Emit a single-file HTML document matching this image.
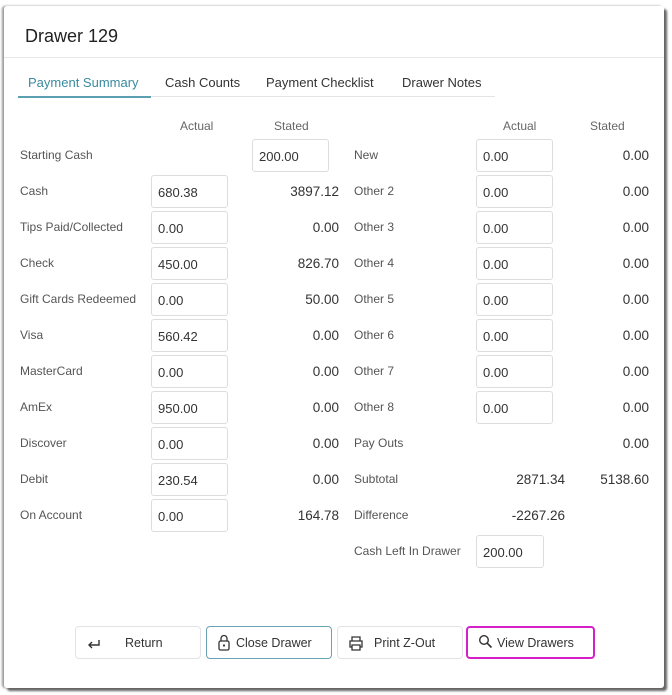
<!DOCTYPE html>
<html><head><meta charset="utf-8"><style>
*{box-sizing:border-box;margin:0;padding:0}
body{width:672px;height:695px;background:#fff;font-family:"Liberation Sans",sans-serif;position:relative;overflow:hidden}
.card{position:absolute;left:4px;top:6px;width:660px;height:682px;background:#fff;box-shadow:3px 3px 2px #666,-2px 0 2px #999;border-radius:3px}
.a{position:absolute;white-space:nowrap}
.t{font-size:18px;color:#222;left:25px;top:26px}
.hr{left:4px;top:57px;width:660px;height:1px;background:#e6e6e6}
.tab{font-size:13px;color:#333;top:75px}
.lb{font-size:12px;color:#555}
.hd{font-size:12px;color:#666}
.v{font-size:13.5px;color:#333;text-align:right}
.in{border:1px solid #ddd;border-radius:3px;height:33px;font-size:13px;color:#333;padding:9px 0 0 6px;background:#fff}
.btn{top:626px;height:33px;border:1px solid #e3e3e3;border-radius:4px;font-size:12.5px;color:#333}
</style></head><body>
<div class="card"></div>
<div class="a t">Drawer 129</div>
<div class="a hr"></div>
<div class="a tab" style="left:28px;color:#3a8aa0">Payment Summary</div>
<div class="a tab" style="left:165px">Cash Counts</div>
<div class="a tab" style="left:266px">Payment Checklist</div>
<div class="a tab" style="left:402px">Drawer Notes</div>
<div class="a" style="left:18px;top:96px;width:477px;height:1px;background:#e4e4e4"></div>
<div class="a" style="left:18px;top:96px;width:133px;height:2px;background:#5b9fb3"></div>

<div class="a hd" style="left:180px;top:119px">Actual</div>
<div class="a hd" style="left:274px;top:119px">Stated</div>
<div class="a hd" style="left:503px;top:119px">Actual</div>
<div class="a hd" style="left:590px;top:119px">Stated</div>

<div class="a lb" style="left:20px;top:148px">Starting Cash</div>
<div class="a lb" style="left:20px;top:184px">Cash</div>
<div class="a lb" style="left:20px;top:220px">Tips Paid/Collected</div>
<div class="a lb" style="left:20px;top:256px">Check</div>
<div class="a lb" style="left:20px;top:292px">Gift Cards Redeemed</div>
<div class="a lb" style="left:20px;top:328px">Visa</div>
<div class="a lb" style="left:20px;top:364px">MasterCard</div>
<div class="a lb" style="left:20px;top:400px">AmEx</div>
<div class="a lb" style="left:20px;top:436px">Discover</div>
<div class="a lb" style="left:20px;top:472px">Debit</div>
<div class="a lb" style="left:20px;top:508px">On Account</div>

<div class="a in" style="left:252px;top:139px;width:77px">200.00</div>
<div class="a in" style="left:151px;top:175px;width:77px">680.38</div>
<div class="a in" style="left:151px;top:211px;width:77px">0.00</div>
<div class="a in" style="left:151px;top:247px;width:77px">450.00</div>
<div class="a in" style="left:151px;top:283px;width:77px">0.00</div>
<div class="a in" style="left:151px;top:319px;width:77px">560.42</div>
<div class="a in" style="left:151px;top:355px;width:77px">0.00</div>
<div class="a in" style="left:151px;top:391px;width:77px">950.00</div>
<div class="a in" style="left:151px;top:427px;width:77px">0.00</div>
<div class="a in" style="left:151px;top:463px;width:77px">230.54</div>
<div class="a in" style="left:151px;top:499px;width:77px">0.00</div>

<div class="a v" style="left:240px;width:99px;top:184px">3897.12</div>
<div class="a v" style="left:240px;width:99px;top:220px">0.00</div>
<div class="a v" style="left:240px;width:99px;top:256px">826.70</div>
<div class="a v" style="left:240px;width:99px;top:292px">50.00</div>
<div class="a v" style="left:240px;width:99px;top:328px">0.00</div>
<div class="a v" style="left:240px;width:99px;top:364px">0.00</div>
<div class="a v" style="left:240px;width:99px;top:400px">0.00</div>
<div class="a v" style="left:240px;width:99px;top:436px">0.00</div>
<div class="a v" style="left:240px;width:99px;top:472px">0.00</div>
<div class="a v" style="left:240px;width:99px;top:508px">164.78</div>

<div class="a lb" style="left:354px;top:148px">New</div>
<div class="a lb" style="left:354px;top:184px">Other 2</div>
<div class="a lb" style="left:354px;top:220px">Other 3</div>
<div class="a lb" style="left:354px;top:256px">Other 4</div>
<div class="a lb" style="left:354px;top:292px">Other 5</div>
<div class="a lb" style="left:354px;top:328px">Other 6</div>
<div class="a lb" style="left:354px;top:364px">Other 7</div>
<div class="a lb" style="left:354px;top:400px">Other 8</div>
<div class="a lb" style="left:354px;top:436px">Pay Outs</div>
<div class="a lb" style="left:354px;top:472px">Subtotal</div>
<div class="a lb" style="left:354px;top:508px">Difference</div>
<div class="a lb" style="left:354px;top:544px">Cash Left In Drawer</div>

<div class="a in" style="left:476px;top:139px;width:77px">0.00</div>
<div class="a in" style="left:476px;top:175px;width:77px">0.00</div>
<div class="a in" style="left:476px;top:211px;width:77px">0.00</div>
<div class="a in" style="left:476px;top:247px;width:77px">0.00</div>
<div class="a in" style="left:476px;top:283px;width:77px">0.00</div>
<div class="a in" style="left:476px;top:319px;width:77px">0.00</div>
<div class="a in" style="left:476px;top:355px;width:77px">0.00</div>
<div class="a in" style="left:476px;top:391px;width:77px">0.00</div>
<div class="a in" style="left:476px;top:535px;width:68px">200.00</div>

<div class="a v" style="left:560px;width:89px;top:148px">0.00</div>
<div class="a v" style="left:560px;width:89px;top:184px">0.00</div>
<div class="a v" style="left:560px;width:89px;top:220px">0.00</div>
<div class="a v" style="left:560px;width:89px;top:256px">0.00</div>
<div class="a v" style="left:560px;width:89px;top:292px">0.00</div>
<div class="a v" style="left:560px;width:89px;top:328px">0.00</div>
<div class="a v" style="left:560px;width:89px;top:364px">0.00</div>
<div class="a v" style="left:560px;width:89px;top:400px">0.00</div>
<div class="a v" style="left:560px;width:89px;top:436px">0.00</div>
<div class="a v" style="left:560px;width:89px;top:472px">5138.60</div>
<div class="a v" style="left:466px;width:99px;top:472px">2871.34</div>
<div class="a v" style="left:466px;width:99px;top:508px">-2267.26</div>

<div class="a btn" style="left:75px;width:126px">
 <svg class="a" style="left:10px;top:10px" width="16" height="14" viewBox="0 0 16 14"><path d="M13 3v5H3M6 5L3 8l3 3" fill="none" stroke="#333" stroke-width="1.4"/></svg>
 <span class="a" style="left:49px;top:9px">Return</span></div>
<div class="a btn" style="left:206px;width:126px;border-color:#6aa3b5">
 <svg class="a" style="left:10px;top:7px" width="14" height="17" viewBox="0 0 14 17"><rect x="2" y="7" width="10" height="9" rx="1.5" fill="none" stroke="#333" stroke-width="1.3"/><path d="M4 7V4.5a3 3 0 0 1 6 0V7" fill="none" stroke="#333" stroke-width="1.3"/><circle cx="7" cy="11.5" r="1.1" fill="#333"/></svg>
 <span class="a" style="left:29px;top:9px">Close Drawer</span></div>
<div class="a btn" style="left:337px;width:126px">
 <svg class="a" style="left:10px;top:9px" width="16" height="15" viewBox="0 0 16 15"><path d="M4 5V1h8v4M4 11H2V5h12v6h-2M4 9h8v5H4z" fill="none" stroke="#333" stroke-width="1.3"/></svg>
 <span class="a" style="left:36px;top:9px">Print Z-Out</span></div>
<div class="a btn" style="left:466px;width:129px;border:2px solid #d61fc8">
 <svg class="a" style="left:10px;top:6px" width="15" height="15" viewBox="0 0 15 15"><circle cx="6" cy="6" r="4.3" fill="none" stroke="#333" stroke-width="1.4"/><path d="M9.2 9.2L13.5 13.5" stroke="#333" stroke-width="1.6"/></svg>
 <span class="a" style="left:29px;top:8px">View Drawers</span></div>
</body></html>
